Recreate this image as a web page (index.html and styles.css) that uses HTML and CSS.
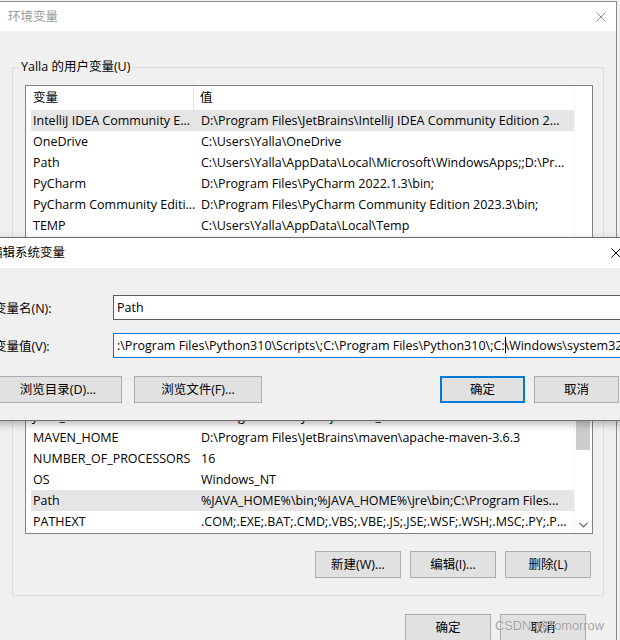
FILE: index.html
```html
<!DOCTYPE html>
<html lang="zh-CN">
<head>
<meta charset="utf-8">
<title>环境变量</title>
<link rel="stylesheet" href="styles.css">
</head>
<body>
<div class="desktop">
  <div class="win main">
    <div class="titlebar">
      <span class="title inactive">环境变量</span>
      <span class="close close-sm"><svg width="10" height="10" viewBox="0 0 10 10"><path d="M0.5 0.5L9.5 9.5M9.5 0.5L0.5 9.5" stroke="#8a8a8a" stroke-width="1"/></svg></span>
    </div>
    <div class="win-body">
      <fieldset class="group">
        <legend>Yalla 的用户变量(U)</legend>
        <div class="list list-user">
          <div class="list-main">
            <div class="list-head"><div class="h-name">变量</div><div class="h-val">值</div></div>
            <div class="rows">
              <div class="row sel"><span class="c1">IntelliJ IDEA Community E...</span><span class="c2">D:\Program Files\JetBrains\IntelliJ IDEA Community Edition 2...</span></div>
              <div class="row"><span class="c1">OneDrive</span><span class="c2">C:\Users\Yalla\OneDrive</span></div>
              <div class="row"><span class="c1">Path</span><span class="c2">C:\Users\Yalla\AppData\Local\Microsoft\WindowsApps;;D:\Pr...</span></div>
              <div class="row"><span class="c1">PyCharm</span><span class="c2">D:\Program Files\PyCharm 2022.1.3\bin;</span></div>
              <div class="row"><span class="c1">PyCharm Community Editi...</span><span class="c2">D:\Program Files\PyCharm Community Edition 2023.3\bin;</span></div>
              <div class="row"><span class="c1">TEMP</span><span class="c2">C:\Users\Yalla\AppData\Local\Temp</span></div>
            </div>
          </div>
          <div class="vscroll"></div>
        </div>
        <div class="btn-row btn-row-hidden"></div>
      </fieldset>
      <fieldset class="group group-sys">
        <legend>系统变量(S)</legend>
        <div class="list list-sys">
          <div class="list-main">
            <div class="list-head"><div class="h-name">变量</div><div class="h-val">值</div></div>
            <div class="rows rows-end">
              <div class="row"><span class="c1">JAVA_HOME</span><span class="c2">D:\Program Files\Java\jdk1.8.0_201</span></div>
              <div class="row"><span class="c1">MAVEN_HOME</span><span class="c2">D:\Program Files\JetBrains\maven\apache-maven-3.6.3</span></div>
              <div class="row"><span class="c1">NUMBER_OF_PROCESSORS</span><span class="c2">16</span></div>
              <div class="row"><span class="c1">OS</span><span class="c2">Windows_NT</span></div>
              <div class="row sel"><span class="c1">Path</span><span class="c2">%JAVA_HOME%\bin;%JAVA_HOME%\jre\bin;C:\Program Files...</span></div>
              <div class="row"><span class="c1">PATHEXT</span><span class="c2">.COM;.EXE;.BAT;.CMD;.VBS;.VBE;.JS;.JSE;.WSF;.WSH;.MSC;.PY;.P...</span></div>
            </div>
          </div>
          <div class="vscroll vscroll-sys">
            <div class="sb-space"></div>
            <div class="sb-thumb"></div>
            <div class="sb-gap"></div>
            <div class="sb-arrow"><svg width="9" height="6" viewBox="0 0 9 6"><path d="M0.5 0.8L4.5 4.8L8.5 0.8" fill="none" stroke="#606060" stroke-width="1.2"/></svg></div>
          </div>
        </div>
        <div class="btn-row">
          <button class="btn">新建(W)...</button>
          <button class="btn">编辑(I)...</button>
          <button class="btn">删除(L)</button>
        </div>
      </fieldset>
      <div class="dlg-buttons">
        <button class="btn">确定</button>
        <button class="btn">取消</button>
      </div>
    </div>
  </div>

  <div class="win edit">
    <div class="titlebar titlebar-edit">
      <span class="title">编辑系统变量</span>
      <span class="close close-lg"><svg width="10" height="10" viewBox="0 0 10 10"><path d="M0.5 0.5L9.5 9.5M9.5 0.5L0.5 9.5" stroke="#000" stroke-width="1"/></svg></span>
    </div>
    <div class="edit-body">
      <div class="field">
        <label class="f-label">变量名(N):</label>
        <div class="textbox">Path</div>
      </div>
      <div class="field">
        <label class="f-label">变量值(V):</label>
        <div class="textbox focus">:\Program Files\Python310\Scripts\;C:\Program Files\Python310\;C:<span class="caret"></span>\Windows\system32</div>
      </div>
      <div class="edit-buttons">
        <button class="btn btn-wide">浏览目录(D)...</button>
        <button class="btn btn-wide">浏览文件(F)...</button>
        <div class="spacer"></div>
        <button class="btn btn-sm btn-default">确定</button>
        <button class="btn btn-sm">取消</button>
      </div>
    </div>
  </div>

  <div class="watermark">CSDN @Tomorrow</div>
</div>
</body>
</html>
```

FILE: styles.css
```css
* { box-sizing: border-box; }
html, body { margin: 0; padding: 0; }
body {
  width: 620px;
  height: 640px;
  overflow: hidden;
  background: #f0f0f0;
  font-family: "Open Sans", "Noto Sans CJK SC", sans-serif;
  font-size: 12.5px;
  color: #000;
}
.desktop {
  position: relative;
  width: 620px;
  height: 640px;
  overflow: hidden;
  background: #f0f0f0;
}
.win {
  position: absolute;
  background: #f0f0f0;
  border: 1px solid #8c8c8c;
}
.main {
  left: -1px;
  top: 1px;
  width: 618px;
  height: 720px;
}
.titlebar {
  height: 29px;
  background: #fff;
  display: flex;
  align-items: center;
  justify-content: space-between;
  padding-left: 8px;
}
.title { line-height: 18px; white-space: nowrap; }
.title.inactive { color: #9b9b9b; }
.close {
  display: flex;
  align-items: center;
  justify-content: center;
  height: 100%;
}
.close-sm { width: 30px; }
.close-lg { width: 46px; }
.close svg { display: block; }

.win-body {
  padding: 27px 12px 0 12px;
}
.group {
  margin: 0;
  min-width: 0;
  border: 1px solid #dcdcdc;
  padding: 9px 10px 17px 12px;
}
.group legend {
  padding: 0 2px;
  margin-left: -6px;
  line-height: 18px;
}
.group-sys { margin-top: 10px; }

.list {
  display: flex;
  background: #fff;
  border: 1px solid #828282;
}
.list-user { height: 190px; }
.list-sys { height: 160px; }
.list-main {
  flex: 1;
  display: flex;
  flex-direction: column;
  min-width: 0;
  overflow: hidden;
}
.list-head {
  display: flex;
  height: 24px;
  flex: none;
  line-height: 24px;
}
.h-name {
  width: 168px;
  padding-left: 7px;
  border-right: 1px solid #e5e5e5;
}
.h-val { padding-left: 6px; }
.rows {
  flex: 1;
  display: flex;
  flex-direction: column;
  overflow: hidden;
  min-height: 0;
}
.rows-end {
  justify-content: flex-end;
  padding-bottom: 1px;
}
.row {
  flex: none;
  display: flex;
  height: 21px;
  line-height: 21px;
  margin-left: 5px;
  white-space: nowrap;
}
.row.sel { background: #e5e5e5; }
.c1 {
  width: 170px;
  flex: none;
  padding-left: 2px;
  overflow: hidden;
}
.c2 { overflow: hidden; }
.vscroll {
  width: 18px;
  flex: none;
  background: #fff;
  border-left: 1px solid #f2f2f2;
}
.vscroll-sys {
  display: flex;
  flex-direction: column;
}
.sb-space { flex: 1; }
.sb-thumb {
  height: 40px;
  width: 14px;
  margin-left: 1px;
  background: #cdcdcd;
}
.sb-gap { height: 66px; flex: none; }
.sb-arrow {
  height: 17px;
  flex: none;
  display: flex;
  align-items: center;
  justify-content: center;
  padding-right: 1px;
}
.sb-arrow svg { display: block; }

.btn {
  font: inherit;
  color: #000;
  background: #e1e1e1;
  border: 1px solid #adadad;
  height: 27px;
  width: 86px;
  padding: 0;
  margin: 0;
  line-height: 25px;
}
.btn-row {
  display: flex;
  justify-content: flex-end;
  gap: 9px;
  margin-top: 17px;
  margin-right: 2px;
}
.btn-row-hidden { height: 27px; }
.dlg-buttons {
  display: flex;
  justify-content: flex-end;
  gap: 9px;
  margin-top: 18px;
  margin-right: 18px;
}

.edit {
  left: -19px;
  top: 237px;
  width: 659px;
  height: 184px;
  border-color: #707070;
  box-shadow: 0 3px 8px rgba(0, 0, 0, 0.28);
}
.titlebar-edit {
  height: 30px;
  padding-left: 8px;
}
.edit-body {
  padding: 27px 8px 17px 12px;
  display: flex;
  flex-direction: column;
  gap: 13px;
}
.field {
  display: grid;
  grid-template-columns: 119px 1fr;
  align-items: center;
}
.f-label { white-space: nowrap; }
.textbox {
  height: 25px;
  line-height: 23px;
  background: #fff;
  border: 1px solid #5a5a5a;
  padding-left: 3px;
  white-space: nowrap;
  overflow: hidden;
}
.textbox.focus { border-color: #0078d7; }
.caret {
  display: inline-block;
  width: 0;
  height: 16px;
  border-left: 1px solid #000;
  vertical-align: -3px;
  margin-right: -1px;
}
.edit-buttons {
  display: flex;
  align-items: center;
  gap: 12px;
  margin-top: 5px;
  padding-right: 12px;
}
.btn-wide { width: 128px; }
.btn-sm { width: 85px; }
.spacer { flex: 1; }
.edit-buttons .btn-default { margin-right: -3px; }
.btn-default {
  border: 2px solid #0078d7;
  line-height: 23px;
}

.watermark {
  position: absolute;
  left: 495px;
  top: 617px;
  font-family: "Liberation Sans", sans-serif;
  font-size: 12.8px;
  line-height: 18px;
  color: rgba(130, 130, 130, 0.75);
  text-shadow: 0 0 1px #fff;
  white-space: nowrap;
}
```
